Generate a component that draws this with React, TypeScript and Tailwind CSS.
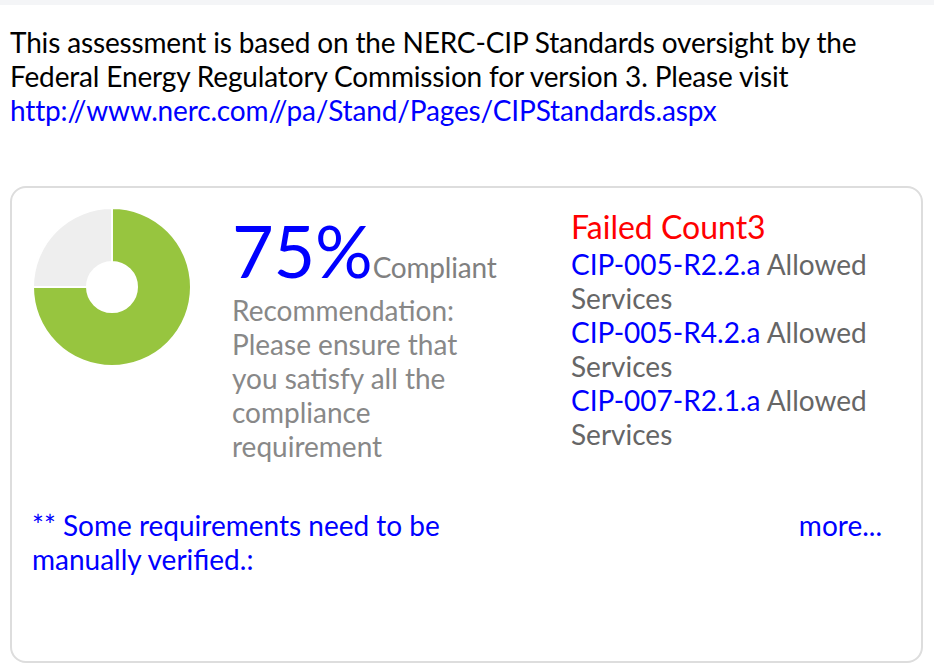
import React from 'react';

const failed = [
  { code: 'CIP-005-R2.2.a', label: 'Allowed Services' },
  { code: 'CIP-005-R4.2.a', label: 'Allowed Services' },
  { code: 'CIP-007-R2.1.a', label: 'Allowed Services' },
];

function Donut() {
  return (
    <svg width="160" height="160" viewBox="-1 -1 160 160" className="block shrink-0">
      <path d="M79,0 A79,79 0 1,1 0,79 L54,79 A25,25 0 1,0 79,54 Z" fill="#97c53f" stroke="#ffffff" strokeWidth="2" />
      <path d="M0,79 A79,79 0 0,1 79,0 L79,54 A25,25 0 0,0 54,79 Z" fill="#eeeeee" stroke="#ffffff" strokeWidth="2" />
    </svg>
  );
}

export default function App() {
  return (
    <div className="min-h-[668px] w-[934px] bg-white font-['Lato','Noto_Sans',sans-serif] text-[28px] leading-[34px]">
      <div className="h-[5px] bg-[#f4f5f7]" />

      {/* Intro */}
      <p className="mt-[20px] px-[10px] tracking-[-0.15px] text-black">
        This assessment is based on the NERC-CIP Standards oversight by the Federal Energy Regulatory Commission for version 3. Please visit{' '}
        <a href="#" className="text-[#0000ff]">http://www.nerc.com//pa/Stand/Pages/CIPStandards.aspx</a>
      </p>

      {/* Compliance card */}
      <div className="mx-[10px] mt-[59px] flex h-[477px] w-[913px] flex-col rounded-[16px] border-2 border-[#dddddd] pl-[20px] pr-[39px] pt-[19px]">
        <div className="flex">
          <Donut />
          <div className="ml-[40px] w-[270px]">
            <div className="tracking-[-0.2px]">
              <span className="text-[72px] leading-[86px] text-[#0000ff]">75%</span>
              <span className="text-[#808080]">Compliant</span>
            </div>
            <div className="text-[#888888]">
              Recommendation: Please ensure that you satisfy all the compliance requirement
            </div>
          </div>
          <div className="ml-[69px] flex-1">
            <div className="mt-[1px] mb-[1px] text-[32px] leading-[38px] text-[#ff0000]">Failed Count3</div>
            {failed.map((f) => (
              <div key={f.code} className="text-[#666666]">
                <a href="#" className="text-[#0000ff]">{f.code}</a> {f.label}
              </div>
            ))}
          </div>
        </div>

        <div className="mt-[45px] flex items-start justify-between">
          <div className="w-[440px] text-[#0000ff]">** Some requirements need to be manually verified.:</div>
          <a href="#" className="text-[#0000ff]">more...</a>
        </div>
      </div>
    </div>
  );
}
